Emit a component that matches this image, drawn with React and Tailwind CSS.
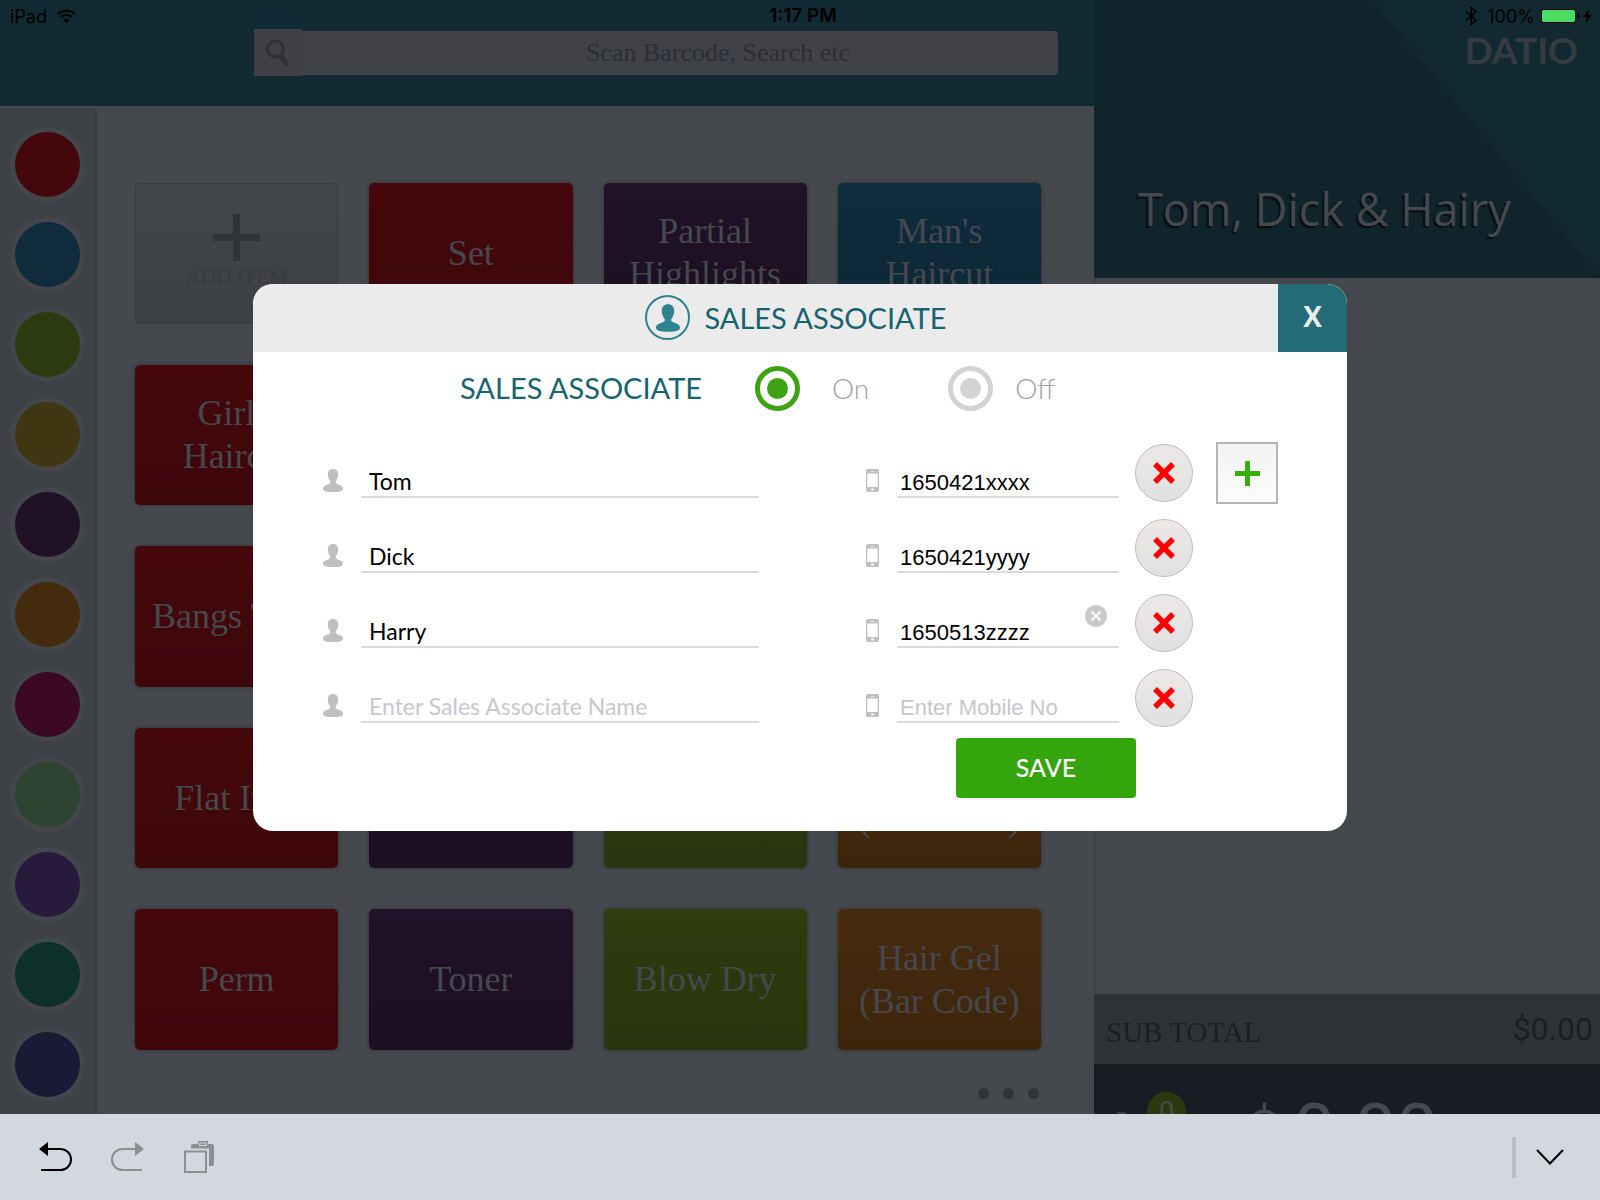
import React, { useState } from "react";

const SWATCHES = [
  { name: "Red", color: "bg-[#44080c]" },
  { name: "Blue", color: "bg-[#0f2b3c]" },
  { name: "Green", color: "bg-[#2c3a0f]" },
  { name: "Yellow", color: "bg-[#403611]" },
  { name: "Purple", color: "bg-[#211127]" },
  { name: "Orange", color: "bg-[#452b0e]" },
  { name: "Magenta", color: "bg-[#3b0826]" },
  { name: "Mint", color: "bg-[#2d4530]" },
  { name: "Violet", color: "bg-[#281a3c]" },
  { name: "Teal", color: "bg-[#0d302b]" },
  { name: "Indigo", color: "bg-[#1a1a37]" },
];

const RED = "bg-linear-to-b from-[#45080c] to-[#3e070b]";
const PURPLE = "bg-linear-to-b from-[#211129] to-[#1c0f22]";
const BLUE = "bg-linear-to-b from-[#0f2c3d] to-[#0d2735]";
const GREEN = "bg-linear-to-b from-[#2e3c0f] to-[#29350e]";
const ORANGE = "bg-linear-to-b from-[#462b0e] to-[#3d250d]";

const TILES = [
  { label: "Set", tone: RED },
  { label: "Partial Highlights", tone: PURPLE },
  { label: "Man's Haircut", tone: BLUE },
  { label: "Girl's Haircut", tone: RED },
  { label: "", tone: RED },
  { label: "", tone: PURPLE },
  { label: "", tone: BLUE },
  { label: "Bangs Trim", tone: RED },
  { label: "", tone: PURPLE },
  { label: "", tone: GREEN },
  { label: "", tone: ORANGE },
  { label: "Flat Iron", tone: RED },
  { label: "Single Break", tone: PURPLE },
  { label: "", tone: GREEN },
  { label: "Shampoo (Bar Code)", tone: ORANGE },
  { label: "Perm", tone: RED },
  { label: "Toner", tone: PURPLE },
  { label: "Blow Dry", tone: GREEN },
  { label: "Hair Gel (Bar Code)", tone: ORANGE },
];

const ASSOCIATES = [
  { name: "Tom", phone: "1650421xxxx" },
  { name: "Dick", phone: "1650421yyyy" },
  { name: "Harry", phone: "1650513zzzz", clearable: true },
  { name: "", phone: "" },
];

function Person({ className }) {
  return (
    <svg viewBox="0 0 20 23" className={className} fill="currentColor" aria-hidden="true">
      <path d="M10 0C13.4 0 15.3 2.3 15.2 5.8 15.1 8.8 14 10.4 13 12 12.3 13.2 12.6 14.2 14 14.9 16.5 16 19.8 16.6 20 19.400 20.1 22 17 23 10 23 3 23-.1 22 0 19.400.2 16.600 3.500 16 6 14.900 7.400 14.200 7.700 13.200 7 12 6 10.400 4.900 8.800 4.800 5.800 4.700 2.300 6.600 0 10 0Z" />
    </svg>
  );
}

function Phone() {
  return (
    <svg viewBox="0 0 13 23" className="h-[23px] w-[13px] shrink-0" aria-hidden="true">
      <rect width="13" height="23" rx="2" fill="#bfbfbf" />
      <rect x="1.300" y="4.500" width="10.400" height="13.500" fill="#fff" />
      <rect x="4.500" y="2" width="4" height="1" fill="#e6e6e6" />
      <rect x="5" y="19.500" width="3" height="2" rx="1" fill="#fff" />
    </svg>
  );
}

function StatusBar() {
  return (
    <div className="absolute inset-x-0 top-0 z-10 grid h-8 grid-cols-3 items-center pl-[10px] pr-2 font-['Inter',sans-serif] text-[18px] text-black">
      <div className="flex items-center gap-[10px]">
        <span>iPad</span>
        <svg viewBox="0 0 19 14" className="h-[14px] w-[19px]" aria-hidden="true">
          <path d="M1 5A12.500 12.500 0 0 1 18 5" fill="none" stroke="#000" strokeWidth="2.200" />
          <path d="M4 8.200A8 8 0 0 1 15 8.200" fill="none" stroke="#000" strokeWidth="2.200" />
          <path d="M9.500 14 6.300 10.700A4.600 4.600 0 0 1 12.700 10.700Z" fill="#000" />
        </svg>
      </div>
      <div className="pl-1 text-center text-[19px] font-semibold">1:17 PM</div>
      <div className="flex items-center justify-end">
        <svg viewBox="0 0 12 20" className="mr-[10px] h-5 w-3" fill="none" stroke="#000" strokeWidth="1.600" aria-hidden="true">
          <path d="M.7 5.200 11 14.500 6 18.500V1.500L11 5.500.7 14.800" />
        </svg>
        <span>100%</span>
        <svg viewBox="0 0 38 14" className="ml-[6px] mr-1 h-[14px] w-[38px]" aria-hidden="true">
          <rect x=".5" y=".5" width="34" height="13" rx="2" fill="#4cd964" stroke="#000" />
          <path d="M36 4.500q2 .5 2 2.500t-2 2.500z" fill="#000" />
        </svg>
        <svg viewBox="0 0 9 14" className="h-[14px] w-[9px]" aria-hidden="true">
          <path d="M6.500 0 0 8h4L2.500 14 9 5.800H5z" fill="#000" />
        </svg>
      </div>
    </div>
  );
}

function Catalog() {
  return (
    <div className="flex min-w-0 flex-1 flex-col bg-[#45494d]">
      <header className="flex h-[106px] shrink-0 bg-[#112a33] pl-[254px] pr-9 pt-[29px]">
        <button aria-label="Search" className="flex h-[47px] w-12 items-center justify-center bg-[#3e4045]">
          <svg viewBox="0 0 24 28" className="h-7 w-6" fill="none" stroke="#2e3136" aria-hidden="true">
            <circle cx="9.500" cy="10" r="8" strokeWidth="3" />
            <path d="M14.500 17.500 21.500 26" strokeWidth="5" />
          </svg>
        </button>
        <input
          aria-label="Scan barcode or search"
          placeholder="Scan Barcode, Search etc"
          className="mt-[2px] h-11 min-w-0 flex-1 rounded-r bg-[#404247] pl-[78px] pr-[2px] text-center font-['Liberation_Serif',serif] text-[26px] text-[#2b2e33] placeholder:text-[#2b2e33]"
        />
      </header>

      <div className="flex flex-1 pt-[2px]">
        <nav
          aria-label="Categories"
          className="flex w-[97px] shrink-0 flex-col items-center gap-[15px] rounded-tr border-r-2 border-t border-[#383b3f] bg-[#3e4145] pt-[18px]"
        >
          {SWATCHES.map((s) => (
            <button key={s.name} aria-label={s.name} className="size-[75px] shrink-0 rounded-full bg-[#43464b] p-[5px]">
              <span className={`block size-full rounded-full ${s.color}`} />
            </button>
          ))}
        </nav>

        <main className="flex min-w-0 flex-1 flex-col pl-[38px] pr-[53px] pt-[75px]">
          <div className="grid flex-1 grid-cols-4 grid-rows-5 gap-x-[31px] gap-y-[41px]">
            <button className="flex flex-col items-center rounded-[5px] border border-[#383b3f] bg-linear-to-b from-[#424549] to-[#3d4044] pt-[30px] text-[#383b40]">
              <svg viewBox="0 0 47 47" className="size-[47px]" stroke="#303338" strokeWidth="7" aria-hidden="true">
                <path d="M23.500 0V47M0 23.500H47" />
              </svg>
              <span className="mt-1 font-['Liberation_Serif',serif] text-[21px] leading-6">ADD ITEM</span>
            </button>
            {TILES.map((t, i) => (
              <button
                key={i}
                className={`flex items-center justify-center rounded-[5px] px-2 text-center font-['Liberation_Serif',serif] text-[36px] leading-[43px] text-[#45494d] shadow-[0_0_4px_rgba(0,0,0,0.35)] ${t.tone}`}
              >
                {t.label}
              </button>
            ))}
          </div>
          <div className="flex h-16 items-center justify-end gap-[14px] pr-[2px] pt-[22px]">
            <i className="size-[11px] rounded-full bg-[#303338]" />
            <i className="size-[11px] rounded-full bg-[#303338]" />
            <i className="size-[11px] rounded-full bg-[#303338]" />
          </div>
        </main>
      </div>
    </div>
  );
}

function Cart() {
  return (
    <aside className="flex w-[506px] shrink-0 flex-col bg-[#44474b]">
      <div className="relative flex h-[278px] flex-col bg-[#10242b]">
        <svg viewBox="0 0 228 278" preserveAspectRatio="none" className="absolute right-0 top-0 h-full w-[228px]" aria-hidden="true">
          <path d="M0 0H228V278Z" fill="#122931" />
        </svg>
        <div className="relative pr-[22px] pt-[26px] text-right font-['Lato',sans-serif] text-[37px] font-bold leading-[48px] text-[#353b42]">
          DATIO
        </div>
        <h1 className="relative mt-[103px] pl-[44px] font-['Open_Sans',sans-serif] text-[45px] leading-[64px] text-[#45484d] [text-shadow:-2px_2px_1px_#0a0d10]">
          Tom, Dick &amp; Hairy
        </h1>
      </div>
      <div className="flex-1 border-l border-[#383b3e]" />
      <div className="flex h-[70px] items-center justify-between bg-[#303336] pl-3 pr-[7px] text-[#1b1e22]">
        <span className="pt-2 font-['Liberation_Serif',serif] text-[29px]">SUB TOTAL</span>
        <span className="font-['Roboto',sans-serif] text-[32px]">$0.00</span>
      </div>
      <div className="flex h-[50px] items-start overflow-hidden bg-[#191d23] pl-[23px] text-[#45484d]">
        <svg viewBox="0 0 30 50" className="h-[50px] w-[30px] shrink-0" aria-hidden="true">
          <path d="M0 48h9v2H0z" fill="#383b40" />
        </svg>
        <span className="mt-7 flex size-[39px] shrink-0 items-center justify-center rounded-full bg-[#2c390f] font-['Roboto',sans-serif] text-[28px]">
          0
        </span>
        <span className="ml-[60px] flex items-baseline gap-3 pt-[27px] font-['Roboto',sans-serif] text-[74px] leading-[80px]">
          <span className="text-[64px] font-light">$</span>
          <span>0.00</span>
        </span>
      </div>
    </aside>
  );
}

function AssociateRow({ index, data, showAdd }) {
  const [name, setName] = useState(data.name);
  const [phone, setPhone] = useState(data.phone);
  return (
    <li className="flex h-[75px] shrink-0 items-center pl-[70px] pr-[69px]">
      <Person className="mr-[18px] mt-[14px] h-[23px] w-5 shrink-0 text-[#bfbfbf]" />
      <input
        aria-label={`Associate ${index + 1} name`}
        value={name}
        onChange={(e) => setName(e.target.value)}
        placeholder="Enter Sales Associate Name"
        className="mt-[9px] h-10 min-w-0 flex-1 border-b-2 border-[#dcdcdc] pl-2 pt-2 font-['Lato',sans-serif] text-[23px] text-black outline-none placeholder:text-[#c7c7cd]"
      />
      <span className="ml-[107px] mr-[18px] mt-[14px] shrink-0">
        <Phone />
      </span>
      <div className="relative mt-[9px] w-[222px] shrink-0">
        <input
          aria-label={`Associate ${index + 1} mobile`}
          value={phone}
          onChange={(e) => setPhone(e.target.value)}
          placeholder="Enter Mobile No"
          className="h-10 w-full border-b-2 border-[#dcdcdc] pl-[3px] pt-3 font-['Liberation_Sans',sans-serif] text-[22px] leading-[26px] text-black outline-none placeholder:text-[#c7c7cd]"
        />
        {data.clearable && (
          <button aria-label="Clear mobile number" onClick={() => setPhone("")} className="absolute -top-[3px] right-3">
            <svg viewBox="0 0 22 22" className="size-[22px]" aria-hidden="true">
              <circle cx="11" cy="11" r="11" fill="#c9c9c9" />
              <path d="M6.500 6.500l9 9M15.500 6.500l-9 9" stroke="#fff" strokeWidth="2" />
            </svg>
          </button>
        )}
      </div>
      <button
        aria-label={`Remove associate ${index + 1}`}
        className="ml-4 flex size-[58px] shrink-0 items-center justify-center rounded-full border border-[#bdbdbd] bg-linear-to-b from-[#ece8e7] to-[#e1e1e1]"
      >
        <svg viewBox="0 0 22 22" className="size-[22px]" stroke="#ff0000" strokeWidth="5.500" aria-hidden="true">
          <path d="M2 2 20 20M20 2 2 20" />
        </svg>
      </button>
      <div className="ml-[23px] w-[62px] shrink-0">
        {showAdd && (
          <button
            aria-label="Add associate"
            className="flex size-[62px] items-center justify-center border-2 border-[#b5b5b5] bg-linear-to-b from-[#f3f3f3] to-[#fcfcfc]"
          >
            <svg viewBox="0 0 25 25" className="size-[25px]" stroke="#39ad0c" strokeWidth="5" aria-hidden="true">
              <path d="M12.500 0V25M0 12.500H25" />
            </svg>
          </button>
        )}
      </div>
    </li>
  );
}

function SalesAssociateDialog() {
  const [enabled, setEnabled] = useState(true);
  return (
    <section
      role="dialog"
      aria-labelledby="dialog-title"
      className="w-full max-w-[1094px] overflow-hidden rounded-[20px] bg-white pb-[33px]"
    >
      <header className="flex h-[68px] bg-[#ebebeb]">
        <div className="flex flex-1 items-center justify-center gap-[14px] pl-[61px]">
          <span className="flex size-[45px] items-center justify-center rounded-full border-2 border-[#2f8290] text-[#2f8290]">
            <Person className="h-7 w-6" />
          </span>
          <h2 id="dialog-title" className="font-['Lato',sans-serif] text-[29px] text-[#176370]">
            SALES ASSOCIATE
          </h2>
        </div>
        <button aria-label="Close" className="w-[69px] bg-[#246b78] pb-1 font-['Open_Sans',sans-serif] text-[28px] font-bold text-[#ebebeb]">
          X
        </button>
      </header>

      <div
        role="radiogroup"
        aria-labelledby="mode-label"
        className="flex h-[73px] items-center pl-[207px] font-['Lato',sans-serif] text-[28px]"
      >
        <span id="mode-label" className="mr-[52px] w-[243px] whitespace-nowrap text-[29px] text-[#176370]">
          SALES ASSOCIATE
        </span>
        <label className="mr-[79px] flex items-center gap-8 font-light text-[#a0a0a0]">
          <input
            type="radio"
            name="associate-mode"
            checked={enabled}
            onChange={() => setEnabled(true)}
            className="size-[45px] appearance-none rounded-full border-[5px] border-[#d3d3d3] bg-[#d3d3d3] bg-clip-content p-[7px] checked:border-[#3da314] checked:bg-[#3da314]"
          />
          On
        </label>
        <label className="flex items-center gap-[22px] font-light text-[#a0a0a0]">
          <input
            type="radio"
            name="associate-mode"
            checked={!enabled}
            onChange={() => setEnabled(false)}
            className="size-[45px] appearance-none rounded-full border-[5px] border-[#d3d3d3] bg-[#d3d3d3] bg-clip-content p-[7px] checked:border-[#3da314] checked:bg-[#3da314]"
          />
          Off
        </label>
      </div>

      <ul className="mt-[11px] flex max-h-[291px] flex-col overflow-hidden">
        {ASSOCIATES.map((a, i) => (
          <AssociateRow key={i} index={i} data={a} showAdd={i === 0} />
        ))}
      </ul>

      <div className="mt-[11px] flex justify-end pr-[211px]">
        <button className="h-[60px] w-[180px] rounded bg-[#34a50c] font-['Lato',sans-serif] text-[25px] font-medium text-white">SAVE</button>
      </div>
    </section>
  );
}

function KeyboardBar() {
  return (
    <footer className="flex h-[86px] shrink-0 items-center bg-[#d3d7df] pl-[39px] pr-9">
      <button aria-label="Undo">
        <svg viewBox="0 0 34 30" className="h-[30px] w-[34px]" fill="none" stroke="#000" strokeWidth="2" aria-hidden="true">
          <path d="M8 7H21.500A10.500 10.500 0 0 1 21.500 28H2" />
          <path d="M9 0V14L0 7Z" fill="#000" stroke="none" />
        </svg>
      </button>
      <button aria-label="Redo" className="ml-[37px]">
        <svg viewBox="0 0 34 30" className="h-[30px] w-[34px]" fill="none" stroke="#8b8e93" strokeWidth="2" aria-hidden="true">
          <path d="M26 7H12.500A10.500 10.500 0 0 0 12.500 28H32" />
          <path d="M25 0V14L34 7Z" fill="#8b8e93" stroke="none" />
        </svg>
      </button>
      <button aria-label="Paste" className="ml-10">
        <svg viewBox="0 0 30 32" className="h-8 w-[30px]" aria-hidden="true">
          <path d="M7 7.500V5a2 2 0 0 1 2-2h5V0h10v3h4a2 2 0 0 1 2 2V23a2 2 0 0 1-2 2h-3V7.500Z" fill="#8b8e93" />
          <path d="M15.500 2h7v2.500h-7z" fill="none" stroke="#d3d7df" strokeWidth="1" />
          <rect x="1" y="10.500" width="21" height="20.500" fill="none" stroke="#8b8e93" strokeWidth="2" />
        </svg>
      </button>
      <span className="ml-auto h-[41px] w-1 bg-[#bbbec4]" />
      <button aria-label="Hide keyboard" className="ml-5">
        <svg viewBox="0 0 28 16" className="h-4 w-7" fill="none" stroke="#000" strokeWidth="2" aria-hidden="true">
          <path d="M1 1 14 14.500 27 1" />
        </svg>
      </button>
    </footer>
  );
}

export default function App() {
  return (
    <div className="flex min-h-screen flex-col">
      <div className="relative flex flex-1">
        <StatusBar />
        <Catalog />
        <Cart />
        <div className="absolute inset-0 flex items-center justify-center">
          <SalesAssociateDialog />
        </div>
      </div>
      <KeyboardBar />
    </div>
  );
}
